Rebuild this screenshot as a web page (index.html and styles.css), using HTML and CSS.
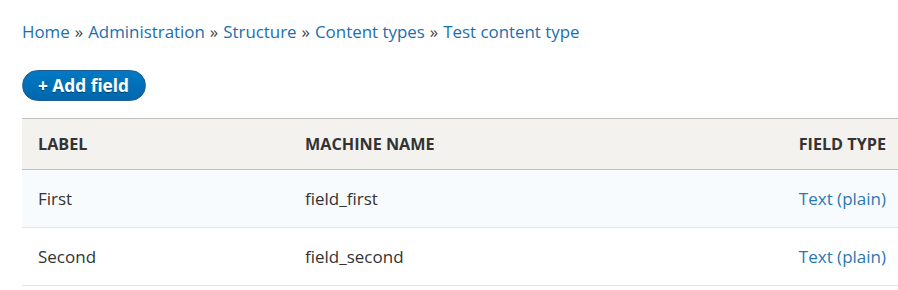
FILE: index.html
```html
<!DOCTYPE html>
<html>
<head>
<meta charset="utf-8">
<link rel="stylesheet" href="styles.css">
</head>
<body>
<div class="page">
  <nav class="breadcrumb">
    <a href="#">Home</a><span class="sep">»</span><a href="#">Administration</a><span class="sep">»</span><a href="#">Structure</a><span class="sep">»</span><a href="#">Content types</a><span class="sep">»</span><a href="#">Test content type</a>
  </nav>
  <div class="actions">
    <a class="button" href="#">+ Add field</a>
  </div>
  <table class="fields">
    <thead>
      <tr><th>Label</th><th>Machine name</th><th class="right">Field type</th></tr>
    </thead>
    <tbody>
      <tr class="odd"><td>First</td><td>field_first</td><td class="right"><a href="#">Text (plain)</a></td></tr>
      <tr><td>Second</td><td>field_second</td><td class="right"><a href="#">Text (plain)</a></td></tr>
    </tbody>
  </table>
</div>
</body>
</html>
```
FILE: styles.css
```css
html, body {
  margin: 0;
  padding: 0;
  background: #fff;
}
body {
  font-family: "Open Sans", "DejaVu Sans", sans-serif;
  color: #333;
  font-size: 14px;
}
.page {
  padding: 0 0 0 22px;
}
.breadcrumb {
  padding-top: 20px;
  font-size: 16.9px;
  line-height: 24px;
  height: 24px;
}
.breadcrumb a {
  color: #1a6faf;
  text-decoration: none;
}
.breadcrumb .sep {
  color: #444;
  margin: 0 5px;
}
.actions {
  margin-top: 26px;
  height: 48px;
}
.button {
  display: inline-block;
  box-sizing: border-box;
  height: 31px;
  line-height: 29px;
  padding: 0 16px 0 15px;
  border-radius: 16px;
  border: 1px solid #1e5c90;
  background: linear-gradient(to top, #0067ad, #0079c4);
  color: #fff;
  font-weight: bold;
  font-size: 17.3px;
  text-decoration: none;
  text-shadow: 0 1px rgba(0,0,0,0.4);
}
.fields {
  width: 100%;
  border-collapse: collapse;
}
.fields th {
  background: #f3f2ef;
  text-transform: uppercase;
  font-weight: bold;
  font-size: 16.2px;
  text-align: left;
  height: 50px;
  padding: 0 12px 0 16px;
  border-top: 1px solid #bfbfba;
  border-bottom: 1px solid #bfbfba;
  color: #333;
}
.fields td {
  height: 57px;
  padding: 0 12px 0 16px;
  border-bottom: 1px solid #e6e4df;
  font-size: 17px;
}
.fields tr.odd td {
  background: #f7fbfd;
}
.fields .right {
  text-align: right;
}
.fields th:nth-child(1) { width: 239px; }
.fields td a {
  color: #2a78b2;
  text-decoration: none;
}
```
